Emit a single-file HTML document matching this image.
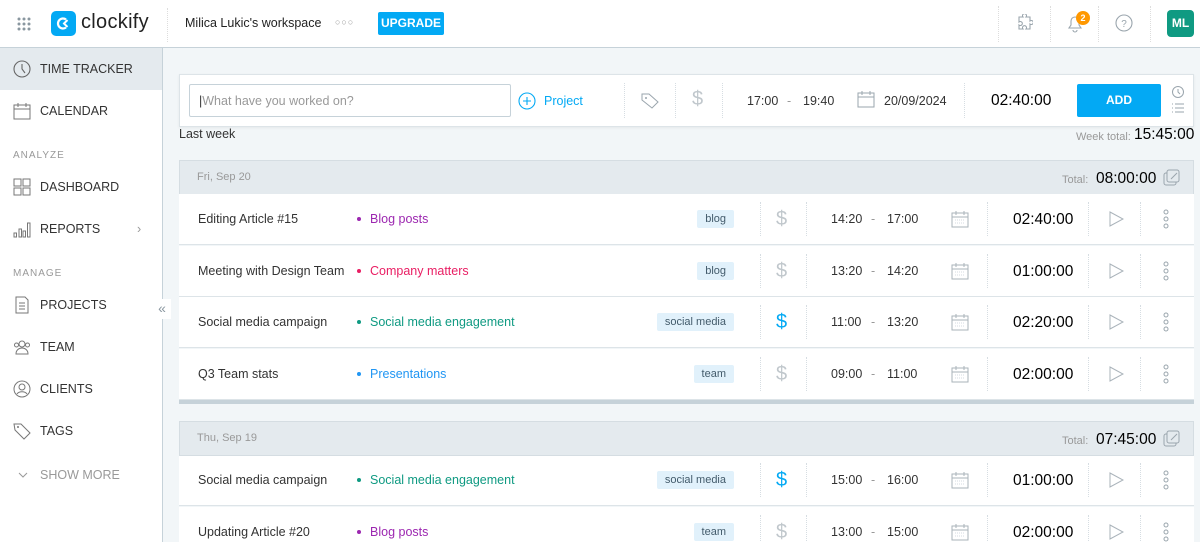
<!DOCTYPE html>
<html style="overflow:hidden;height:542px"><head><meta charset="utf-8"><style>
*{box-sizing:border-box;margin:0;padding:0}
body{width:1200px;height:542px;overflow:hidden;font-family:"Liberation Sans",sans-serif;background:#f2f6f8;position:relative;color:#333}
.abs{position:absolute}
.top{left:0;top:0;width:1200px;height:48px;background:#fff;border-bottom:1px solid #c6d2d9}
.side{left:0;top:48px;width:163px;height:494px;background:#fff;border-right:1px solid #c6d2d9}
.nav{position:absolute;left:0;width:162px;height:42px;display:flex;align-items:center;font-size:12.5px;color:#333}
.nav svg{position:absolute;left:13px}
.nav span{position:absolute;left:40px}
.sec{position:absolute;left:13px;font-size:10px;color:#999;letter-spacing:1px}
.card{background:#fff;border:1px solid #dde4e8}
.vsep{position:absolute;top:8px;bottom:8px;border-left:1px dotted #d6dde2}
.row{position:absolute;left:179px;width:1015px;height:51px;background:#fff;border-bottom:1px solid #dde4e8;font-size:12.5px}
.row>*{position:absolute}
.desc{left:19px;top:18px;color:#333}
.dot{left:178px;top:23px;width:4px;height:4px;border-radius:50%}
.proj{left:191px;top:18px}
.tag{right:460px;top:16px;background:#e1f1fb;color:#435b6b;font-size:11px;padding:3px 8px;border-radius:2px}
.dol{left:597px;top:14px;font-size:20px;color:#c0c7cc;font-weight:300}
.t{top:18px;font-size:12.5px}
.dur{left:834px;top:17px;font-size:15.5px;color:#000}
.hdr{position:absolute;left:179px;width:1015px;height:35px;background:#e4eaee;border:1px solid #d5dde2}
</style></head><body>
<div class="abs top">
 <svg class="abs" style="left:17px;top:17px" width="14" height="14"><g fill="#8a97a0"><circle cx="2" cy="2" r="1.5"/><circle cx="7" cy="2" r="1.5"/><circle cx="12" cy="2" r="1.5"/><circle cx="2" cy="7" r="1.5"/><circle cx="7" cy="7" r="1.5"/><circle cx="12" cy="7" r="1.5"/><circle cx="2" cy="12" r="1.5"/><circle cx="7" cy="12" r="1.5"/><circle cx="12" cy="12" r="1.5"/></g></svg>
 <div class="abs" style="left:51px;top:11px;width:25px;height:25px;background:#03a9f4;border-radius:5px"></div>
 <svg class="abs" style="left:51px;top:11px" width="25" height="25"><path d="M15 8.5a5 5 0 1 0 0 8" stroke="#fff" stroke-width="2.2" fill="none"/><path d="M16.5 9l-3.5 3.5 3.5 3.5" stroke="#fff" stroke-width="2" fill="none"/></svg>
 <div class="abs" style="left:81px;top:11px;font-size:20px;color:#222;letter-spacing:0.3px">clockify</div>
 <div class="abs" style="left:167px;top:8px;height:34px;border-left:1px dotted #ddd"></div>
 <div class="abs" style="left:185px;top:16px;font-size:12.5px;color:#222">Milica Lukic's workspace</div>
 <div class="abs" style="left:335px;top:17px;font-size:9px;color:#999;letter-spacing:1px">○○○</div>
 <div class="abs" style="left:378px;top:12px;width:66px;height:23px;background:#03a9f4;color:#fff;font-size:12px;font-weight:bold;text-align:center;line-height:23px;border-radius:2px">UPGRADE</div>
 <div class="abs" style="left:998px;top:6px;height:36px;border-left:1px dotted #ddd"></div>
 <div class="abs" style="left:1050px;top:6px;height:36px;border-left:1px dotted #ddd"></div>
 <div class="abs" style="left:1098px;top:6px;height:36px;border-left:1px dotted #ddd"></div>
 <div class="abs" style="left:1150px;top:6px;height:36px;border-left:1px dotted #ddd"></div>
 <svg class="abs" style="left:1015px;top:14px" width="18" height="18"><path d="M4 3h4a2 2 0 1 1 3 0h4v4a2 2 0 1 1 0 3v5h-4a2 2 0 1 0-3 0H4v-4a2 2 0 1 0 0-3z" fill="none" stroke="#9aa5ad" stroke-width="1.1"/></svg>
 <svg class="abs" style="left:1066px;top:13px" width="18" height="20"><path d="M3 15h12l-2-3V8a4 4 0 0 0-8 0v4z M7 17a2 2 0 0 0 4 0" fill="none" stroke="#9aa5ad" stroke-width="1.1"/></svg>
 <div class="abs" style="left:1076px;top:11px;width:14px;height:14px;background:#ff9800;border-radius:50%;color:#fff;font-size:9px;font-weight:bold;text-align:center;line-height:14px">2</div>
 <svg class="abs" style="left:1115px;top:14px" width="18" height="18"><circle cx="9" cy="9" r="8" fill="none" stroke="#9aa5ad" stroke-width="1.1"/><text x="9" y="13" font-size="10" text-anchor="middle" fill="#9aa5ad" font-family="Liberation Sans">?</text></svg>
 <div class="abs" style="left:1167px;top:10px;width:27px;height:27px;background:#0f9a82;border-radius:4px;color:#fff;font-size:12px;font-weight:bold;text-align:center;line-height:27px">ML</div>
</div>

<div class="abs side">
 <div class="nav" style="top:0;background:#e4eaee"><svg width="18" height="18"><circle cx="9" cy="9" r="8" fill="none" stroke="#666" stroke-width="1.1"/><path d="M9 4v5l3 4" fill="none" stroke="#666" stroke-width="1.1"/></svg><span>TIME TRACKER</span></div>
 <div class="nav" style="top:42px"><svg width="18" height="18"><rect x="1" y="3" width="16" height="14" fill="none" stroke="#777"/><path d="M1 7h16M5 1v4M13 1v4" stroke="#777"/></svg><span>CALENDAR</span></div>
 <div class="sec" style="top:102px">ANALYZE</div>
 <div class="nav" style="top:118px"><svg width="18" height="18"><g fill="none" stroke="#777"><rect x="1" y="1" width="7" height="7"/><rect x="10" y="1" width="7" height="7"/><rect x="1" y="10" width="7" height="7"/><rect x="10" y="10" width="7" height="7"/></g></svg><span>DASHBOARD</span></div>
 <div class="nav" style="top:160px"><svg width="18" height="18"><g fill="none" stroke="#777"><rect x="1" y="13" width="2.5" height="4"/><rect x="6" y="9" width="2.5" height="8"/><rect x="10" y="11" width="2.5" height="6"/><rect x="14.5" y="3" width="2.5" height="14"/></g></svg><span>REPORTS</span><span style="left:137px;color:#999">›</span></div>
 <div class="sec" style="top:220px">MANAGE</div>
 <div class="nav" style="top:236px"><svg width="18" height="18"><path d="M3 1h9l3 3v13H3z M6 7h6M6 10h6M6 13h6" fill="none" stroke="#777"/></svg><span>PROJECTS</span></div>
 <div class="nav" style="top:278px"><svg width="18" height="18"><g fill="none" stroke="#777"><circle cx="9" cy="6" r="3"/><path d="M3 16c0-4 3-6 6-6s6 2 6 6z"/><circle cx="3.5" cy="7" r="2"/><circle cx="14.5" cy="7" r="2"/></g></svg><span>TEAM</span></div>
 <div class="nav" style="top:320px"><svg width="18" height="18"><g fill="none" stroke="#777"><circle cx="9" cy="9" r="8"/><circle cx="9" cy="7" r="3"/><path d="M4 14c2-3 8-3 10 0"/></g></svg><span>CLIENTS</span></div>
 <div class="nav" style="top:362px"><svg width="18" height="18"><path d="M1 2h7l9 9-6 6-9-9z" fill="none" stroke="#777"/><circle cx="5" cy="5" r="1" fill="#777"/></svg><span>TAGS</span></div>
 <div class="nav" style="top:406px;color:#999"><svg width="12" height="12" style="left:17px"><path d="M2 4l4 4 4-4" fill="none" stroke="#999"/></svg><span>SHOW MORE</span></div>
</div>
<div class="abs" style="left:153px;top:299px;width:18px;height:20px;background:#fff;color:#8a97a0;font-size:14px;text-align:center;line-height:19px">«</div>

<div class="abs card" style="left:179px;top:74px;width:1015px;height:53px;box-shadow:0 1px 3px rgba(0,0,0,.06)">
 <div class="abs" style="left:9px;top:9px;width:322px;height:33px;border:1px solid #c6d2d9;border-radius:2px"></div>
 <div class="abs" style="left:19px;top:19px;font-size:12.5px;color:#999"><span style="color:#333">|</span>What have you worked on?</div>
 <svg class="abs" style="left:338px;top:17px" width="18" height="18"><circle cx="9" cy="9" r="8" fill="none" stroke="#03a9f4" stroke-width="1.1"/><path d="M9 5v8M5 9h8" stroke="#03a9f4" stroke-width="1.1"/></svg>
 <div class="abs" style="left:364px;top:19px;font-size:12.5px;color:#03a9f4">Project</div>
 <div class="vsep" style="left:444px"></div>
 <svg class="abs" style="left:460px;top:17px" width="20" height="18"><path d="M2 2h7l9 8-6 6-10-8z" fill="none" stroke="#9aa5ad"/><circle cx="6" cy="6" r="1" fill="#9aa5ad"/></svg>
 <div class="vsep" style="left:495px"></div>
 <div class="abs" style="left:512px;top:13px;font-size:20px;color:#c0c7cc">$</div>
 <div class="vsep" style="left:542px"></div>
 <div class="abs" style="left:567px;top:19px;font-size:12.5px">17:00</div>
 <div class="abs" style="left:607px;top:19px;font-size:12.5px;color:#999">-</div>
 <div class="abs" style="left:623px;top:19px;font-size:12.5px">19:40</div>
 <svg class="abs" style="left:677px;top:15px" width="18" height="18"><rect x="1" y="3" width="16" height="14" fill="none" stroke="#9aa5ad"/><path d="M1 7h16M5 1v4M13 1v4" stroke="#9aa5ad"/></svg>
 <div class="abs" style="left:704px;top:19px;font-size:12.5px">20/09/2024</div>
 <div class="vsep" style="left:784px"></div>
 <div class="abs" style="left:811px;top:17px;font-size:15.5px;color:#000">02:40:00</div>
 <div class="abs" style="left:897px;top:9px;width:84px;height:33px;background:#03a9f4;color:#fff;font-size:12px;font-weight:bold;text-align:center;line-height:33px;border-radius:2px">ADD</div>
 <svg class="abs" style="left:991px;top:10px" width="14" height="14"><circle cx="7" cy="7" r="5.5" fill="none" stroke="#9aa5ad"/><path d="M7 4v3l2 2" fill="none" stroke="#9aa5ad"/></svg>
 <svg class="abs" style="left:991px;top:27px" width="14" height="12"><path d="M1 2h1M4 2h9M1 6h1M4 6h9M1 10h1M4 10h9" stroke="#9aa5ad"/></svg>
</div>
<div class="abs" style="left:179px;top:127px;font-size:12.5px">Last week</div>
<div class="abs" style="left:1076px;top:131px;font-size:11px;color:#999">Week total:</div>
<div class="abs" style="left:1134px;top:126px;font-size:15.5px;color:#000">15:45:00</div>

<div class="hdr" style="top:160px"><div class="abs" style="left:17px;top:10px;font-size:11px;color:#999">Fri, Sep 20</div><div class="abs" style="left:882px;top:13px;font-size:11px;color:#999">Total:</div><div class="abs" style="left:916px;top:9px;font-size:15.5px;color:#000">08:00:00</div><svg class="abs" style="left:983px;top:8px" width="18" height="18"><rect x="1" y="4" width="12" height="12" rx="2" fill="none" stroke="#9aa5ad"/><rect x="4" y="1" width="12" height="12" rx="2" fill="#e4eaee" stroke="#9aa5ad"/><path d="M8 10l6-6" stroke="#9aa5ad"/></svg></div>

<div id="rows"></div>
<div class="abs" style="left:179px;top:400px;width:1015px;height:4px;background:#c6d2d9"></div>
<div class="hdr" style="top:421px"><div class="abs" style="left:17px;top:10px;font-size:11px;color:#999">Thu, Sep 19</div><div class="abs" style="left:882px;top:13px;font-size:11px;color:#999">Total:</div><div class="abs" style="left:916px;top:9px;font-size:15.5px;color:#000">07:45:00</div><svg class="abs" style="left:983px;top:8px" width="18" height="18"><rect x="1" y="4" width="12" height="12" rx="2" fill="none" stroke="#9aa5ad"/><rect x="4" y="1" width="12" height="12" rx="2" fill="#e4eaee" stroke="#9aa5ad"/><path d="M8 10l6-6" stroke="#9aa5ad"/></svg></div>
<script>
var R=[[194,"Editing Article #15","Blog posts","#9c27b0","blog",0,"14:20","17:00","02:40:00"],
[246,"Meeting with Design Team","Company matters","#e91e63","blog",0,"13:20","14:20","01:00:00"],
[297,"Social media campaign","Social media engagement","#0f9a82","social media",1,"11:00","13:20","02:20:00"],
[349,"Q3 Team stats","Presentations","#2196f3","team",0,"09:00","11:00","02:00:00"],
[455,"Social media campaign","Social media engagement","#0f9a82","social media",1,"15:00","16:00","01:00:00"],
[507,"Updating Article #20","Blog posts","#9c27b0","team",0,"13:00","15:00","02:00:00"]];
var h="";R.forEach(function(r){h+='<div class="row" style="top:'+r[0]+'px"><div class="desc">'+r[1]+'</div><div class="dot" style="background:'+r[3]+'"></div><div class="proj" style="color:'+r[3]+'">'+r[2]+'</div><div class="tag">'+r[4]+'</div><div class="vsep" style="left:581px"></div><div class="dol" style="'+(r[5]?'color:#03a9f4;font-weight:normal':'')+'">$</div><div class="vsep" style="left:627px"></div><div class="t" style="left:652px">'+r[6]+'</div><div class="t" style="left:692px;color:#999">-</div><div class="t" style="left:708px">'+r[7]+'</div><svg style="left:772px;top:16px" width="18" height="18"><rect x="1" y="3" width="16" height="14" fill="none" stroke="#aab3ba"/><path d="M1 7h16M5 1v4M13 1v4" stroke="#aab3ba"/><path d="M4 10h10M4 13h10" stroke="#d5dbe0" stroke-dasharray="1 1"/></svg><div class="vsep" style="left:808px"></div><div class="dur">'+r[8]+'</div><div class="vsep" style="left:909px"></div><svg style="left:929px;top:17px" width="16" height="16"><path d="M2 1l13 7-13 7z" fill="none" stroke="#aab3ba"/></svg><div class="vsep" style="left:961px"></div><svg style="left:983px;top:15px" width="8" height="22"><g fill="none" stroke="#9aa5ad"><circle cx="4" cy="3" r="2"/><circle cx="4" cy="10" r="2"/><circle cx="4" cy="17" r="2"/></g></svg></div>'});
document.getElementById("rows").innerHTML=h;
</script>
</body></html>
